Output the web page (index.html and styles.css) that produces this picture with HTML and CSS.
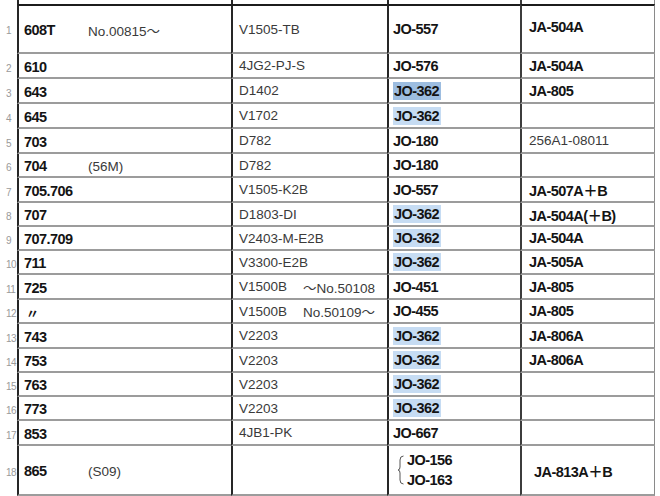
FILE: index.html
```html
<!DOCTYPE html>
<html lang="ja">
<head>
<meta charset="utf-8">
<title>適合表</title>
<link rel="stylesheet" href="styles.css">
</head>
<body>
<div class="sheet">
  <div class="row stub"><div class="num"></div><div class="c c1"></div><div class="c c2"></div><div class="c c3"></div><div class="c c4"></div></div>

  <div class="row first h50">
    <div class="num">1</div>
    <div class="c c1"><span class="b key">608T</span><span class="r">No.00815～</span></div>
    <div class="c c2"><span class="r">V1505-TB</span></div>
    <div class="c c3"><span class="b">JO-557</span></div>
    <div class="c c4"><span class="b up">JA-504A</span></div>
  </div>

  <div class="row">
    <div class="num">2</div>
    <div class="c c1"><span class="b">610</span></div>
    <div class="c c2"><span class="r">4JG2-PJ-S</span></div>
    <div class="c c3"><span class="b">JO-576</span></div>
    <div class="c c4"><span class="b">JA-504A</span></div>
  </div>

  <div class="row">
    <div class="num">3</div>
    <div class="c c1"><span class="b">643</span></div>
    <div class="c c2"><span class="r">D1402</span></div>
    <div class="c c3"><span class="b hl dark">JO-362</span></div>
    <div class="c c4"><span class="b">JA-805</span></div>
  </div>

  <div class="row">
    <div class="num">4</div>
    <div class="c c1"><span class="b">645</span></div>
    <div class="c c2"><span class="r">V1702</span></div>
    <div class="c c3"><span class="b hl">JO-362</span></div>
    <div class="c c4"></div>
  </div>

  <div class="row">
    <div class="num">5</div>
    <div class="c c1"><span class="b">703</span></div>
    <div class="c c2"><span class="r">D782</span></div>
    <div class="c c3"><span class="b">JO-180</span></div>
    <div class="c c4"><span class="r">256A1-08011</span></div>
  </div>

  <div class="row h24">
    <div class="num">6</div>
    <div class="c c1"><span class="b key">704</span><span class="r">(56M)</span></div>
    <div class="c c2"><span class="r">D782</span></div>
    <div class="c c3"><span class="b">JO-180</span></div>
    <div class="c c4"></div>
  </div>

  <div class="row">
    <div class="num">7</div>
    <div class="c c1"><span class="b">705.706</span></div>
    <div class="c c2"><span class="r">V1505-K2B</span></div>
    <div class="c c3"><span class="b">JO-557</span></div>
    <div class="c c4"><span class="b">JA-507A＋B</span></div>
  </div>

  <div class="row h24">
    <div class="num">8</div>
    <div class="c c1"><span class="b">707</span></div>
    <div class="c c2"><span class="r">D1803-DI</span></div>
    <div class="c c3"><span class="b hl">JO-362</span></div>
    <div class="c c4"><span class="b">JA-504A(＋B)</span></div>
  </div>

  <div class="row h24">
    <div class="num">9</div>
    <div class="c c1"><span class="b">707.709</span></div>
    <div class="c c2"><span class="r">V2403-M-E2B</span></div>
    <div class="c c3"><span class="b hl">JO-362</span></div>
    <div class="c c4"><span class="b">JA-504A</span></div>
  </div>

  <div class="row h24">
    <div class="num">10</div>
    <div class="c c1"><span class="b">711</span></div>
    <div class="c c2"><span class="r">V3300-E2B</span></div>
    <div class="c c3"><span class="b hl">JO-362</span></div>
    <div class="c c4"><span class="b">JA-505A</span></div>
  </div>

  <div class="row">
    <div class="num">11</div>
    <div class="c c1"><span class="b">725</span></div>
    <div class="c c2"><span class="r key2">V1500B</span><span class="r">～No.50108</span></div>
    <div class="c c3"><span class="b">JO-451</span></div>
    <div class="c c4"><span class="b">JA-805</span></div>
  </div>

  <div class="row h24">
    <div class="num">12</div>
    <div class="c c1"><span class="b ditto">〃</span></div>
    <div class="c c2"><span class="r key2">V1500B</span><span class="r">No.50109～</span></div>
    <div class="c c3"><span class="b">JO-455</span></div>
    <div class="c c4"><span class="b">JA-805</span></div>
  </div>

  <div class="row">
    <div class="num">13</div>
    <div class="c c1"><span class="b">743</span></div>
    <div class="c c2"><span class="r">V2203</span></div>
    <div class="c c3"><span class="b hl">JO-362</span></div>
    <div class="c c4"><span class="b">JA-806A</span></div>
  </div>

  <div class="row h24">
    <div class="num">14</div>
    <div class="c c1"><span class="b">753</span></div>
    <div class="c c2"><span class="r">V2203</span></div>
    <div class="c c3"><span class="b hl">JO-362</span></div>
    <div class="c c4"><span class="b">JA-806A</span></div>
  </div>

  <div class="row h24">
    <div class="num">15</div>
    <div class="c c1"><span class="b">763</span></div>
    <div class="c c2"><span class="r">V2203</span></div>
    <div class="c c3"><span class="b hl">JO-362</span></div>
    <div class="c c4"></div>
  </div>

  <div class="row h24">
    <div class="num">16</div>
    <div class="c c1"><span class="b">773</span></div>
    <div class="c c2"><span class="r">V2203</span></div>
    <div class="c c3"><span class="b hl">JO-362</span></div>
    <div class="c c4"></div>
  </div>

  <div class="row">
    <div class="num">17</div>
    <div class="c c1"><span class="b">853</span></div>
    <div class="c c2"><span class="r">4JB1-PK</span></div>
    <div class="c c3"><span class="b">JO-667</span></div>
    <div class="c c4"></div>
  </div>

  <div class="row h50 last">
    <div class="num">18</div>
    <div class="c c1"><span class="b key">865</span><span class="r">(S09)</span></div>
    <div class="c c2"></div>
    <div class="c c3">
      <svg class="brace" width="8" height="30" viewBox="0 0 8 30" aria-hidden="true">
        <path d="M6.5 1 Q3 1 3 5 L3 12 Q3 15 1 15 Q3 15 3 18 L3 25 Q3 29 6.5 29" fill="none" stroke="#555" stroke-width="1"/>
      </svg>
      <div class="pair"><span class="b">JO-156</span><span class="b">JO-163</span></div>
    </div>
    <div class="c c4"><span class="b">JA-813A＋B</span></div>
  </div>
</div>
</body>
</html>
```

FILE: styles.css
```css
* {
  box-sizing: border-box;
}

body {
  margin: 0;
  background: #ffffff;
  width: 660px;
  height: 496px;
  overflow: hidden;
  font-family: "Liberation Sans", Arial, "Noto Sans CJK JP", sans-serif;
}

.sheet {
  display: flex;
  flex-direction: column;
}

.row {
  display: grid;
  grid-template-columns: 17px 214px 156px 133px 135px;
  height: 25px;
  flex: none;
}

.row.h24 {
  height: 24px;
}

.row.h50 {
  height: 50px;
}

.row.stub {
  height: 4px;
}

.num {
  display: flex;
  align-items: center;
  padding-left: 6px;
  padding-top: 3px;
  font-size: 10px;
  letter-spacing: -0.6px;
  color: #9a9a9a;
}

.c {
  display: flex;
  align-items: center;
  border-left: 2px solid #262626;
  border-bottom: 2px solid #9c9c9c;
}

.stub .c {
  border-bottom: none;
}

.first .c {
  border-top: 2px solid #1c1c1c;
}

.c1 {
  padding-left: 5px;
  padding-top: 2px;
}

.c2 {
  padding-left: 6px;
}

.c3 {
  padding-left: 4px;
}

.c4 {
  padding-left: 7px;
  border-left-color: #3c3c3c;
  border-right: 1px solid #8a8a8a;
}

.b {
  font-weight: bold;
  font-size: 14.5px;
  letter-spacing: -0.55px;
  color: #141414;
}

.r {
  font-size: 13.5px;
  color: #3a3a3a;
}

.up {
  margin-bottom: 5px;
}

.key {
  display: inline-block;
  width: 64px;
}

.key2 {
  display: inline-block;
  width: 64px;
}

.hl {
  background: #c6dcf3;
  padding: 1px 2px 1px 1px;
}

.hl.dark {
  background: #9dbde0;
}

.ditto {
  font-family: "Noto Sans CJK JP", sans-serif;
  font-size: 13px;
  padding-left: 2px;
}

.brace {
  flex: none;
  margin-left: 4px;
  margin-right: 2px;
}

.pair {
  display: flex;
  flex-direction: column;
  line-height: 20px;
}

.last .c4 {
  padding-left: 12px;
}
```
